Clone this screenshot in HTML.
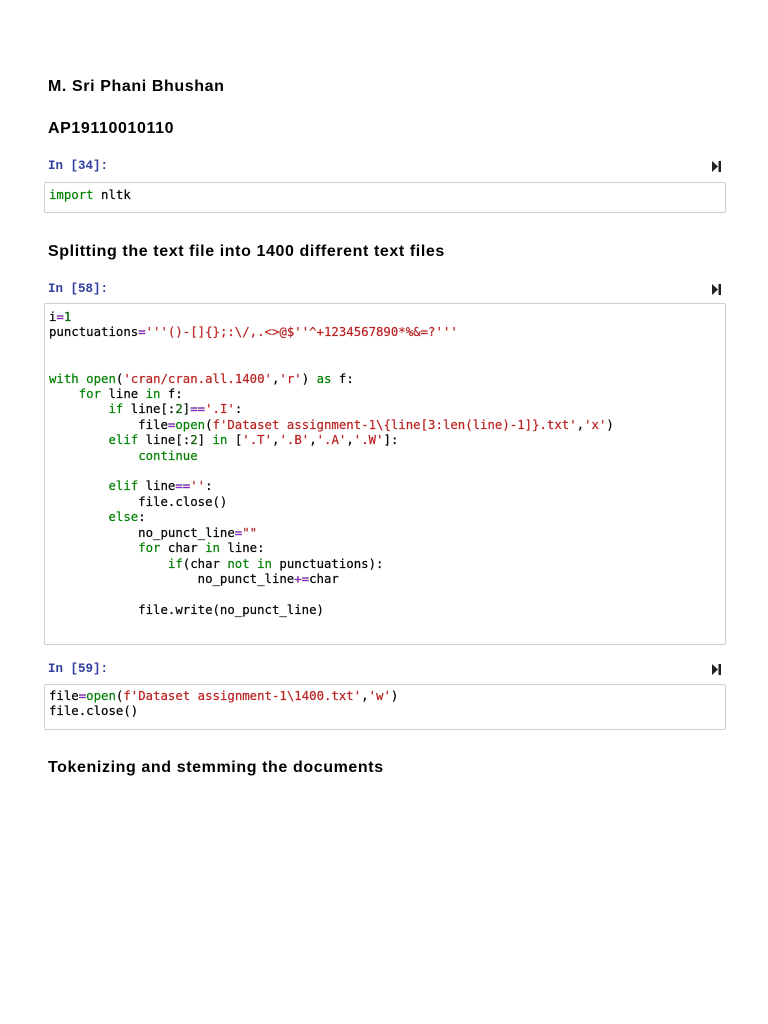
<!DOCTYPE html>
<html><head><style>
body{margin:0;background:#fff;width:768px;height:1024px;position:relative;font-family:"Liberation Sans",sans-serif;}
.h{position:absolute;left:48px;font-weight:bold;font-size:16px;letter-spacing:0.6px;color:#000;}
.p{position:absolute;left:48px;font-family:"Liberation Mono",monospace;font-size:12.5px;color:#303f9f;font-weight:bold;}
.box{position:absolute;left:44px;width:680px;border:1px solid #cfcfcf;background:#fff;border-radius:2px;}
pre{margin:0;position:absolute;left:4px;font-family:"DejaVu Sans Mono","Liberation Mono",monospace;font-size:12.35px;line-height:15.4px;color:#000;-webkit-text-stroke:0.2px #000;}
.k{color:#008000;font-weight:normal;-webkit-text-stroke:0.2px #008000}.s{color:#ba2121;-webkit-text-stroke:0.2px #ba2121}.o{color:#aa22ff}.n{color:#008000}.b{color:#008000;-webkit-text-stroke:0.2px #008000}
.run{position:absolute;left:712px;width:9px;height:11px;}
</style></head><body>
<div class="h" style="top:78px">M. Sri Phani Bhushan</div>
<div class="h" style="top:120px">AP19110010110</div>
<div class="p" style="top:159px">In [34]:</div>
<svg class="run" style="top:161px" viewBox="0 0 9 11"><path d="M0 0L6 5.5L0 11Z" fill="#222"/><rect x="6.5" y="0" width="2.5" height="11" fill="#222"/></svg>
<div class="box" style="top:182px;height:29px"><pre style="top:5px"><span class="k">import</span> nltk</pre></div>
<div class="h" style="top:243px">Splitting the text file into 1400 different text files</div>
<div class="p" style="top:282px">In [58]:</div>
<svg class="run" style="top:284px" viewBox="0 0 9 11"><path d="M0 0L6 5.5L0 11Z" fill="#222"/><rect x="6.5" y="0" width="2.5" height="11" fill="#222"/></svg>
<div class="box" style="top:303px;height:340px"><pre style="top:6px">i<span class="o">=</span><span class="n">1</span>
punctuations<span class="o">=</span><span class="s">'''()-[]{};:\/,.&lt;&gt;@$''^+1234567890*%&amp;=?'''</span>


<span class="k">with</span> <span class="b">open</span>(<span class="s">'cran/cran.all.1400'</span>,<span class="s">'r'</span>) <span class="k">as</span> f:
    <span class="k">for</span> line <span class="k">in</span> f:
        <span class="k">if</span> line[:<span class="n">2</span>]<span class="o">==</span><span class="s">'.I'</span>:
            file<span class="o">=</span><span class="b">open</span>(<span class="s">f'Dataset assignment-1\{line[3:len(line)-1]}.txt'</span>,<span class="s">'x'</span>)
        <span class="k">elif</span> line[:<span class="n">2</span>] <span class="k">in</span> [<span class="s">'.T'</span>,<span class="s">'.B'</span>,<span class="s">'.A'</span>,<span class="s">'.W'</span>]:
            <span class="k">continue</span>

        <span class="k">elif</span> line<span class="o">==</span><span class="s">''</span>:
            file.close()
        <span class="k">else</span>:
            no_punct_line<span class="o">=</span><span class="s">""</span>
            <span class="k">for</span> char <span class="k">in</span> line:
                <span class="k">if</span>(char <span class="k">not</span> <span class="k">in</span> punctuations):
                    no_punct_line<span class="o">+=</span>char

            file.write(no_punct_line)</pre></div>
<div class="p" style="top:662px">In [59]:</div>
<svg class="run" style="top:664px" viewBox="0 0 9 11"><path d="M0 0L6 5.5L0 11Z" fill="#222"/><rect x="6.5" y="0" width="2.5" height="11" fill="#222"/></svg>
<div class="box" style="top:684px;height:44px"><pre style="top:4px">file<span class="o">=</span><span class="b">open</span>(<span class="s">f'Dataset assignment-1\1400.txt'</span>,<span class="s">'w'</span>)
file.close()</pre></div>
<div class="h" style="top:759px">Tokenizing and stemming the documents</div>
</body></html>
